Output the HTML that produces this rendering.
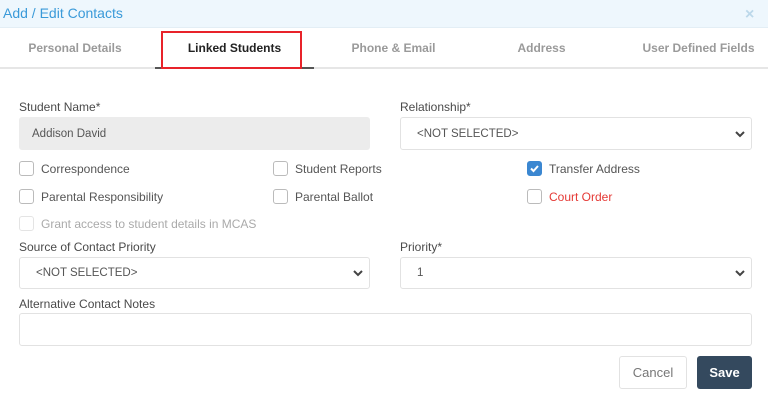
<!DOCTYPE html>
<html><head><style>
*{box-sizing:border-box;margin:0;padding:0}
body{width:768px;height:408px;background:#fff;font-family:"Liberation Sans",sans-serif;position:relative;overflow:hidden;color:#444}
.abs{position:absolute}
.hdr{left:0;top:0;width:768px;height:28px;background:#eef7fd;border-bottom:1px solid #e3eef5}
.title{left:3px;top:5px;font-size:14px;color:#3a9ad9}
.close{left:745px;top:6px;font-size:16px;color:#bcd8ea;font-weight:bold}
.tab{top:41px;font-size:12px;font-weight:bold;color:#9a9a9a;text-align:center}
.line{left:0;top:67px;width:768px;height:2px;background:#e6e6e6}
.lbl{font-size:12px;color:#4a4a4a}
.in{border:1px solid #e2e2e2;border-radius:3px;background:#fff;font-size:11.5px;color:#555;padding-left:16px;display:flex;align-items:center}
.chev{position:absolute;right:6px;top:50%;margin-top:-4px}
.cb{width:15px;height:15px;border:1px solid #bbb;border-radius:3px;background:#fff}
.cl{font-size:12px;color:#555}
</style></head><body>
<div class="abs hdr"></div>
<div class="abs title">Add / Edit Contacts</div>
<div class="abs close">×</div>
<div class="abs line"></div>
<div class="abs" style="left:155px;top:67px;width:159px;height:2px;background:#555"></div>
<div class="abs" style="left:161px;top:31px;width:141px;height:38px;border:2px solid #e8232a"></div>
<div class="abs tab" style="left:0;width:150px">Personal Details</div>
<div class="abs tab" style="left:155px;width:159px;color:#222">Linked Students</div>
<div class="abs tab" style="left:314px;width:159px">Phone &amp; Email</div>
<div class="abs tab" style="left:462px;width:159px">Address</div>
<div class="abs tab" style="left:621px;width:155px">User Defined Fields</div>

<div class="abs lbl" style="left:19px;top:100px">Student Name*</div>
<div class="abs in" style="left:19px;top:117px;width:351px;height:33px;background:#ececec;border-color:#ececec;padding-left:12px">Addison David</div>
<div class="abs lbl" style="left:400px;top:100px">Relationship*</div>
<div class="abs in" style="left:400px;top:117px;width:352px;height:33px">&lt;NOT SELECTED&gt;<svg class="chev" width="10" height="8" viewBox="0 0 10 8"><path d="M1 2l4 4 4-4" stroke="#444" stroke-width="2" fill="none"/></svg></div>

<div class="abs cb" style="left:19px;top:161px"></div><div class="abs cl" style="left:41px;top:162px">Correspondence</div>
<div class="abs cb" style="left:273px;top:161px"></div><div class="abs cl" style="left:295px;top:162px">Student Reports</div>
<div class="abs cb" style="left:527px;top:161px;background:#3b87d1;border-color:#3b87d1"><svg width="13" height="13" viewBox="0 0 13 13" style="display:block"><path d="M3 6.5l2.5 2.5 4.5-5" stroke="#fff" stroke-width="2" fill="none"/></svg></div><div class="abs cl" style="left:549px;top:162px">Transfer Address</div>
<div class="abs cb" style="left:19px;top:189px"></div><div class="abs cl" style="left:41px;top:190px">Parental Responsibility</div>
<div class="abs cb" style="left:273px;top:189px"></div><div class="abs cl" style="left:295px;top:190px">Parental Ballot</div>
<div class="abs cb" style="left:527px;top:189px"></div><div class="abs cl" style="left:549px;top:190px;color:#e53935">Court Order</div>
<div class="abs cb" style="left:19px;top:216px;border-color:#e4e4e4"></div><div class="abs cl" style="left:41px;top:217px;color:#aaa">Grant access to student details in MCAS</div>

<div class="abs lbl" style="left:19px;top:240px">Source of Contact Priority</div>
<div class="abs in" style="left:19px;top:257px;width:351px;height:32px">&lt;NOT SELECTED&gt;<svg class="chev" width="10" height="8" viewBox="0 0 10 8"><path d="M1 2l4 4 4-4" stroke="#444" stroke-width="2" fill="none"/></svg></div>
<div class="abs lbl" style="left:400px;top:240px">Priority*</div>
<div class="abs in" style="left:400px;top:257px;width:352px;height:32px">1<svg class="chev" width="10" height="8" viewBox="0 0 10 8"><path d="M1 2l4 4 4-4" stroke="#444" stroke-width="2" fill="none"/></svg></div>
<div class="abs lbl" style="left:19px;top:297px">Alternative Contact Notes</div>
<div class="abs in" style="left:19px;top:313px;width:733px;height:33px"></div>

<div class="abs" style="left:619px;top:356px;width:68px;height:33px;border:1px solid #e2e2e2;border-radius:3px;font-size:13px;color:#777;text-align:center;line-height:31px">Cancel</div>
<div class="abs" style="left:697px;top:356px;width:55px;height:33px;background:#34495e;border-radius:3px;font-size:13px;font-weight:bold;color:#fff;text-align:center;line-height:33px">Save</div>
</body></html>
